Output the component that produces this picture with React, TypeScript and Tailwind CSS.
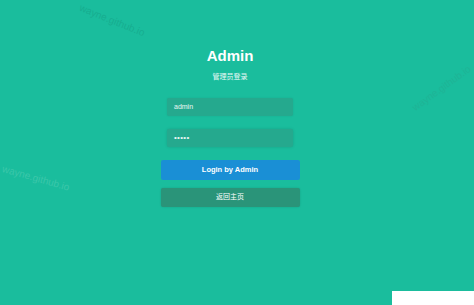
import React from "react";

function Watermark({ className, rot }: { className: string; rot: string }) {
  return (
    <div
      className={`absolute whitespace-nowrap text-[10px] leading-[11px] font-['Liberation_Sans',sans-serif] origin-top-left ${className}`}
      style={{ transform: rot }}
    >
      wayne.github.io
    </div>
  );
}

export default function App() {
  return (
    <div className="relative w-[474px] h-[305px] overflow-hidden bg-white font-['Liberation_Sans','Noto_Sans_CJK_SC',sans-serif]">
      <div className="absolute inset-0 bg-[#1abd9d]" />
      <div className="absolute right-0 bottom-0 w-[82px] h-[14px] bg-white" />
      <Watermark className="left-[82px] top-[2px] text-[#17ad90]" rot="rotate(22deg)" />
      <Watermark className="left-[410px] top-[104px] text-[#1fb496]" rot="rotate(-36deg)" />
      <Watermark className="left-[4px] top-[163px] text-[#3ac7aa]" rot="rotate(16deg)" />
      <div className="relative flex flex-col items-center w-[460px] pt-[47px]">
        <h1 className="text-[15px] leading-[18px] font-bold text-white">Admin</h1>
        <p className="mt-[7px] text-[7px] leading-[9px] text-white/90">管理员登录</p>
        <div className="mt-[17px] flex flex-col items-center w-[126px]">
          <div className="w-[126px] h-[18px] rounded-[2px] bg-[#25a98e] shadow-[0_0_2px_rgba(0,0,0,0.1)] flex items-center px-[7px] text-[7px] text-white/90">
            admin
          </div>
          <div className="mt-[13px] w-[126px] h-[18px] rounded-[2px] bg-[#25a98e] shadow-[0_0_3px_rgba(0,0,0,0.15)] flex items-center px-[7px] text-[8px] tracking-[0.3px] text-white/90">
            •••••
          </div>
        </div>
        <button className="mt-[13px] w-[139px] h-[20px] rounded-[2px] bg-[#1a8fd5] text-white text-[7.5px] font-bold flex items-center justify-center">
          Login by Admin
        </button>
        <button className="mt-[8px] w-[139px] h-[19px] rounded-[2px] bg-[#2a9479] shadow-[0_0_2px_rgba(0,0,0,0.15)] text-white text-[7px] flex items-center justify-center">
          返回主页
        </button>
      </div>
    </div>
  );
}
